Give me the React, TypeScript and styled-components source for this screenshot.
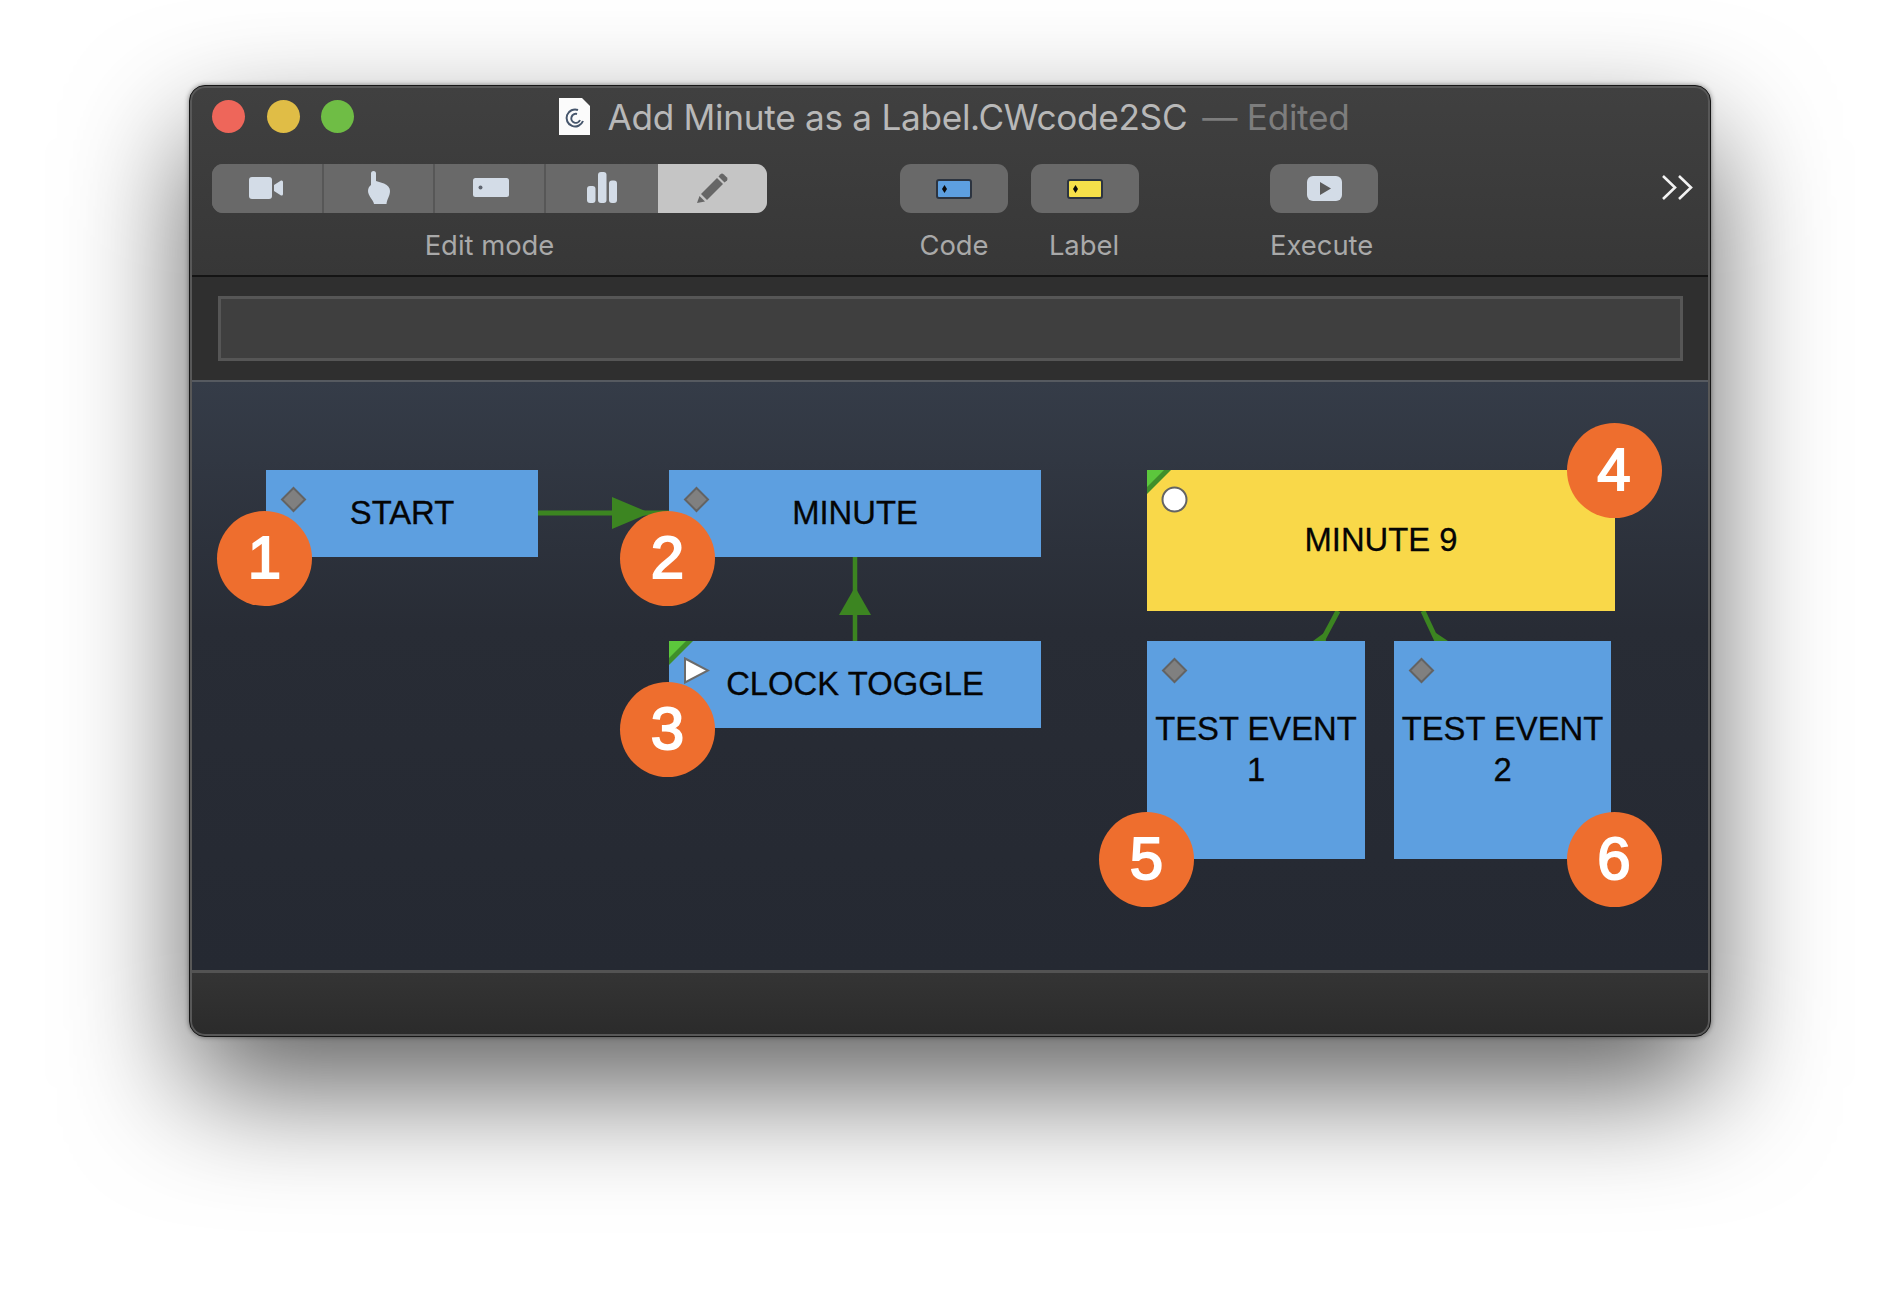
import * as React from "react";
import styled, { createGlobalStyle } from "styled-components";

const GlobalStyle = createGlobalStyle`
  html, body {
    margin: 0;
    padding: 0;
    background: #fff;
  }
`;

const CANVAS_X = 192;
const CANVAS_Y = 382;

const Page = styled.div`
  box-sizing: border-box;
  width: 1902px;
  height: 1308px;
  padding: 85px 0 0 189px;
  overflow: hidden;
  background: #fff;
`;

const Window = styled.div`
  box-sizing: border-box;
  width: 1522px;
  height: 952px;
  padding: 2px;
  border: 1px solid #161616;
  border-radius: 16px;
  background: #585858;
  box-shadow: 0 52px 120px rgba(0, 0, 0, 0.62), 0 0 5px rgba(0, 0, 0, 0.45);
`;

const Frame = styled.div`
  display: flex;
  flex-direction: column;
  height: 100%;
  border-radius: 13px;
  overflow: hidden;
`;

const Header = styled.header`
  height: 187px;
  background: linear-gradient(#404040, #373737);
  border-bottom: 2px solid #141414;
  flex: none;
  box-sizing: content-box;
`;

const TitleBar = styled.div`
  display: grid;
  grid-template-columns: 1fr auto 1fr;
  align-items: center;
  height: 56px;
  padding: 0 20px;
  margin-bottom: 20px;
`;

const Lights = styled.div`
  display: flex;
  gap: 21.5px;
`;

const Light = styled.span<{ $color: string }>`
  width: 33px;
  height: 33px;
  border-radius: 50%;
  background: ${(p) => p.$color};
`;

const Title = styled.div`
  display: flex;
  align-items: center;
  margin-left: 8px;
  padding-top: 1px;
  font-family: Inter, "Liberation Sans", sans-serif;
  font-size: 35.2px;
  letter-spacing: -0.3px;
  color: #b8b8b8;
  white-space: nowrap;
`;

const TitleName = styled.span`
  margin-left: 18px;
`;

const TitleState = styled.span`
  margin-left: 15px;
  color: #7d7d7d;
`;

const Toolbar = styled.div`
  display: flex;
  align-items: flex-start;
  padding: 0 15px 0 20px;
`;

const Tool = styled.div<{ $ml?: number }>`
  display: flex;
  flex-direction: column;
  align-items: center;
  margin-left: ${(p) => p.$ml ?? 0}px;
`;

const ToolLabel = styled.span<{ $nudge?: number }>`
  margin-top: 15px;
  margin-right: ${(p) => p.$nudge ?? 0}px;
  font-family: Inter, "Liberation Sans", sans-serif;
  font-size: 27.4px;
  line-height: 34px;
  color: #a9a9a9;
`;

const Segments = styled.div`
  display: flex;
  width: 555px;
  height: 49px;
  border-radius: 11px;
  overflow: hidden;
  background: #696969;
`;

const Segment = styled.div<{ $w: number; $active?: boolean; $first?: boolean; $shift?: number }>`
  box-sizing: border-box;
  flex: 0 0 ${(p) => p.$w}px;
  display: flex;
  align-items: center;
  justify-content: center;
  padding-bottom: 2px;
  padding-left: ${(p) => Math.max(p.$shift ?? 0, 0)}px;
  padding-right: ${(p) => Math.max(-(p.$shift ?? 0), 0)}px;
  background: ${(p) => (p.$active ? "#c5c5c5" : "#696969")};
  border-left: ${(p) => (p.$first || p.$active ? "none" : "2px solid #575757")};
`;

const ToolButton = styled.div`
  display: flex;
  align-items: center;
  justify-content: center;
  width: 108px;
  height: 49px;
  border-radius: 11px;
  background: #696969;
`;

const More = styled.div`
  margin-left: auto;
  padding-top: 11px;
  line-height: 0;
`;

const SearchArea = styled.div`
  flex: none;
  height: 103px;
  box-sizing: border-box;
  padding: 19px 25px 19px 26px;
  background: #2f2f2f;
`;

const SearchBox = styled.div`
  box-sizing: border-box;
  height: 65px;
  border: 3px solid #565656;
  background: #3f3f3f;
`;

const Canvas = styled.main`
  position: relative;
  flex: 1;
  background: linear-gradient(#353c48, #282c35 42%, #252932);
`;

const CanvasEdge = styled.div`
  flex: none;
  height: 2px;
  background: #565a60;
`;

const Links = styled.svg`
  position: absolute;
  left: 0;
  top: 0;
  width: 100%;
  height: 100%;
`;

const Node = styled.div<{ $x: number; $y: number; $w: number; $h: number; $kind: "code" | "label" }>`
  position: absolute;
  box-sizing: border-box;
  left: ${(p) => p.$x - CANVAS_X}px;
  top: ${(p) => p.$y - CANVAS_Y}px;
  width: ${(p) => p.$w}px;
  height: ${(p) => p.$h}px;
  display: flex;
  align-items: center;
  justify-content: center;
  text-align: center;
  padding-bottom: 2px;
  background: ${(p) => (p.$kind === "label" ? "#f9d849" : "#5d9fe0")};
  font-family: "Liberation Sans", Arial, sans-serif;
  font-size: 32.8px;
  line-height: 41.5px;
  color: #050505;
  -webkit-text-stroke: 0.3px #050505;
`;

const Marker = styled.svg`
  position: absolute;
  left: 14px;
  top: 16px;
  width: 27px;
  height: 27px;
`;

const Corner = styled.svg`
  position: absolute;
  left: 0;
  top: 0;
  width: 24px;
  height: 24px;
`;

const Badge = styled.div<{ $x: number; $y: number }>`
  position: absolute;
  left: ${(p) => p.$x - CANVAS_X - 47.5}px;
  top: ${(p) => p.$y - CANVAS_Y - 47.5}px;
  width: 95px;
  height: 95px;
  border-radius: 50%;
  display: flex;
  align-items: center;
  justify-content: center;
  background: #ee6e2e;
  color: #fff;
  font-family: "Liberation Sans", Arial, sans-serif;
  font-size: 60px;
  line-height: 1;
  -webkit-text-stroke: 2px #fff;
`;

const Footer = styled.footer`
  flex: none;
  height: 64px;
  box-sizing: border-box;
  border-top: 3px solid #535353;
  background: linear-gradient(#343434, #2b2b2b);
`;

const ICON = "#d3dce7";

const VideoIcon = () => (
  <svg width="34" height="22" viewBox="0 0 34 22">
    <rect width="23" height="22" rx="3" fill={ICON} />
    <path d="M25 8 L32 3.5 Q34 3 34 5 V17 Q34 19 32 18.5 L25 14 Z" fill={ICON} />
  </svg>
);

const HandIcon = () => (
  <svg width="22" height="33" viewBox="0 0 22 33">
    <path
      d="M3 2.5 a2.5 2.5 0 0 1 5 0 V10 L16 12.5 C20 14 22 17 22 20 C22 25 19 28 18.5 33 H6 C5.5 29 0 25 0 20 C0 17 1.5 15 3 14 Z"
      fill={ICON}
    />
  </svg>
);

const CardIcon = () => (
  <svg width="36" height="19" viewBox="0 0 36 19">
    <rect width="36" height="19" rx="2.5" fill={ICON} />
    <circle cx="7.5" cy="9.5" r="2" fill="#5f6570" />
  </svg>
);

const BarsIcon = () => (
  <svg width="30" height="31" viewBox="0 0 30 31">
    <rect x="0" y="14" width="8.5" height="17" rx="3" fill={ICON} />
    <rect x="11" y="0" width="8.5" height="31" rx="3" fill={ICON} />
    <rect x="22" y="8.5" width="8" height="22.5" rx="3" fill={ICON} />
  </svg>
);

const PencilIcon = () => (
  <svg width="31" height="30" viewBox="0 0 31 30">
    <path d="M4 21 L20 5 L26 11 L10 27 Z" fill="#666" />
    <path d="M21.5 3.5 L23.5 1.2 Q25 0 26.5 1.2 L30 4.5 Q31 6 30 7.5 L27.5 9.5 Z" fill="#666" />
    <path d="M2.5 23 L8 28.5 L0 30 Z" fill="#666" />
  </svg>
);

const ChipIcon = ({ fill }: { fill: string }) => (
  <svg width="36" height="20" viewBox="0 0 36 20">
    <rect x="1" y="1" width="34" height="18" rx="2" fill={fill} stroke="#2c3440" strokeWidth="2" />
    <path d="M8.5 6 L11 10 L8.5 14 L6 10 Z" fill="#0a0a0a" />
  </svg>
);

const PlayIcon = () => (
  <svg width="35" height="25" viewBox="0 0 35 25">
    <rect width="35" height="25" rx="6" fill={ICON} />
    <path d="M13 6 L24 12.5 L13 19 Z" fill="#5a5a5a" />
  </svg>
);

const ChevronsIcon = () => (
  <svg width="31" height="25" viewBox="0 0 31 25" fill="none" stroke="#f2f2f2" strokeWidth="2.6">
    <polyline points="1,1 13,12.5 1,24" />
    <polyline points="17,1 29,12.5 17,24" />
  </svg>
);

const DocIcon = () => (
  <svg width="31" height="37" viewBox="0 0 31 37">
    <path d="M0 0 H23 L31 8 V37 H0 Z" fill="#fbfbfb" />
    <path d="M19 12 A8.5 8.5 0 1 0 24 23" fill="none" stroke="#46566c" strokeWidth="2" />
    <path d="M18 16 A4.5 4.5 0 1 0 21 22" fill="none" stroke="#46566c" strokeWidth="2" />
  </svg>
);

const DiamondMark = () => (
  <Marker viewBox="0 0 27 27">
    <path d="M13.5 2 L25 13.5 L13.5 25 L2 13.5 Z" fill="#808080" stroke="#636363" strokeWidth="2" />
  </Marker>
);

const TriangleMark = () => (
  <Marker viewBox="0 0 27 27">
    <path d="M2 1.5 L25 13.5 L2 25.5 Z" fill="#fff" stroke="#6b6b6b" strokeWidth="2" />
  </Marker>
);

const CircleMark = () => (
  <Marker viewBox="0 0 27 27">
    <circle cx="13.5" cy="13.5" r="12" fill="#fff" stroke="#646464" strokeWidth="2" />
  </Marker>
);

const CornerMark = () => (
  <Corner viewBox="0 0 24 24">
    <path d="M0 0 H24 L0 24 Z" fill="#3f8f2a" />
    <path d="M0 0 H17 L0 17 Z" fill="#5cc73c" />
  </Corner>
);

const GREEN = "#3c8521";

// link coordinates are page pixels minus the canvas origin
const pt = (x: number, y: number) => `${x - CANVAS_X},${y - CANVAS_Y}`;

const nodes = [
  { text: "START", x: 266, y: 470, w: 272, h: 87, mark: <DiamondMark /> },
  { text: "MINUTE", x: 669, y: 470, w: 372, h: 87, mark: <DiamondMark /> },
  { text: "CLOCK TOGGLE", x: 669, y: 641, w: 372, h: 87, mark: <TriangleMark />, corner: true },
  { text: "MINUTE 9", x: 1147, y: 470, w: 468, h: 141, mark: <CircleMark />, corner: true, label: true },
  { text: "TEST EVENT 1", x: 1147, y: 641, w: 218, h: 218, mark: <DiamondMark /> },
  { text: "TEST EVENT 2", x: 1394, y: 641, w: 217, h: 218, mark: <DiamondMark /> },
];

const badges = [
  { n: 1, x: 264.5, y: 558 },
  { n: 2, x: 667.5, y: 558 },
  { n: 3, x: 667.5, y: 729 },
  { n: 4, x: 1614, y: 470 },
  { n: 5, x: 1146.5, y: 859 },
  { n: 6, x: 1614, y: 859 },
];

export default function App() {
  return (
    <Page>
      <GlobalStyle />
      <Window>
        <Frame>
          <Header>
            <TitleBar>
              <Lights>
                <Light $color="#ee665a" />
                <Light $color="#e0bd46" />
                <Light $color="#6fbd45" />
              </Lights>
              <Title>
                <DocIcon />
                <TitleName>Add Minute as a Label.CWcode2SC</TitleName>
                <TitleState>— Edited</TitleState>
              </Title>
              <span />
            </TitleBar>
            <Toolbar>
              <Tool>
                <Segments>
                  <Segment $w={110} $first $shift={-3}><VideoIcon /></Segment>
                  <Segment $w={111}><HandIcon /></Segment>
                  <Segment $w={111} $shift={3}><CardIcon /></Segment>
                  <Segment $w={113.5} $shift={1}><BarsIcon /></Segment>
                  <Segment $w={109.5} $active><PencilIcon /></Segment>
                </Segments>
                <ToolLabel>Edit mode</ToolLabel>
              </Tool>
              <Tool $ml={133}>
                <ToolButton><ChipIcon fill="#5d9fe0" /></ToolButton>
                <ToolLabel>Code</ToolLabel>
              </Tool>
              <Tool $ml={23}>
                <ToolButton><ChipIcon fill="#f5e04a" /></ToolButton>
                <ToolLabel $nudge={2}>Label</ToolLabel>
              </Tool>
              <Tool $ml={131}>
                <ToolButton><PlayIcon /></ToolButton>
                <ToolLabel $nudge={5}>Execute</ToolLabel>
              </Tool>
              <More><ChevronsIcon /></More>
            </Toolbar>
          </Header>
          <SearchArea>
            <SearchBox />
          </SearchArea>
          <CanvasEdge />
          <Canvas>
            <Links>
              <polyline points={`${pt(538, 513)} ${pt(669, 513)}`} stroke={GREEN} strokeWidth="5" />
              <polygon points={`${pt(612, 497)} ${pt(650, 513)} ${pt(612, 529)}`} fill={GREEN} />
              <polyline points={`${pt(855, 557)} ${pt(855, 641)}`} stroke={GREEN} strokeWidth="4.5" />
              <polygon points={`${pt(855, 587)} ${pt(871, 615)} ${pt(839, 615)}`} fill={GREEN} />
              <polyline points={`${pt(1338, 611)} ${pt(1322, 641)}`} stroke={GREEN} strokeWidth="5" />
              <polygon points={`${pt(1313, 641)} ${pt(1324, 633)} ${pt(1326, 641)}`} fill={GREEN} />
              <polyline points={`${pt(1423, 611)} ${pt(1437, 641)}`} stroke={GREEN} strokeWidth="5" />
              <polygon points={`${pt(1448, 641)} ${pt(1436, 633)} ${pt(1434, 641)}`} fill={GREEN} />
            </Links>
            {nodes.map((n) => (
              <Node key={n.text} $x={n.x} $y={n.y} $w={n.w} $h={n.h} $kind={n.label ? "label" : "code"}>
                {n.corner && <CornerMark />}
                {n.mark}
                {n.text}
              </Node>
            ))}
            {badges.map((b) => (
              <Badge key={b.n} $x={b.x} $y={b.y}>{b.n}</Badge>
            ))}
          </Canvas>
          <Footer />
        </Frame>
      </Window>
    </Page>
  );
}
